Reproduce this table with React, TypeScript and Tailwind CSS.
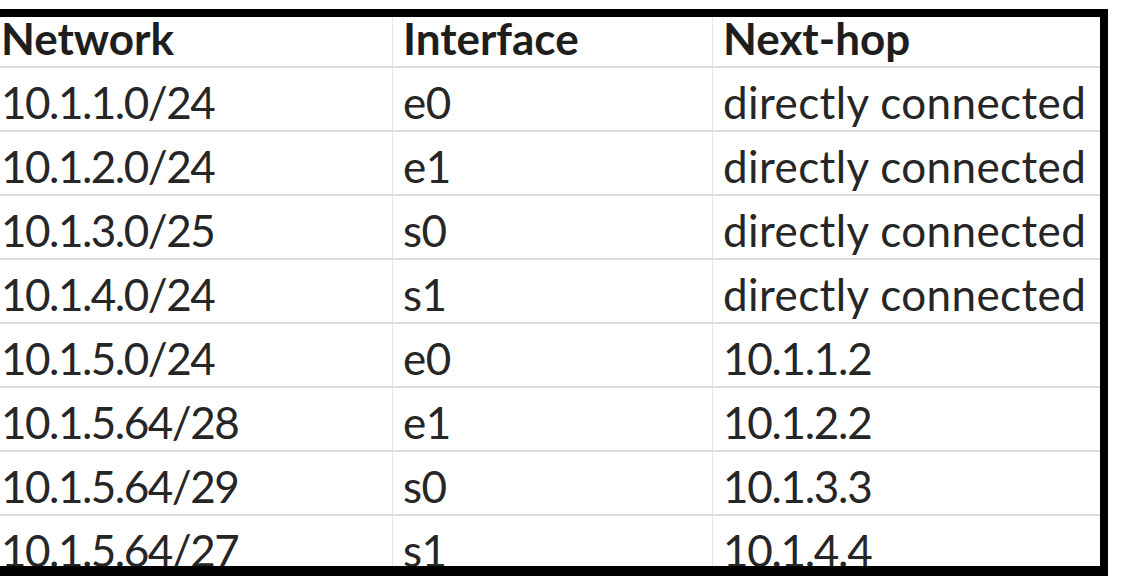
import React from "react";

const rows: [string, string, string][] = [
  ["10.1.1.0/24", "e0", "directly connected"],
  ["10.1.2.0/24", "e1", "directly connected"],
  ["10.1.3.0/25", "s0", "directly connected"],
  ["10.1.4.0/24", "s1", "directly connected"],
  ["10.1.5.0/24", "e0", "10.1.1.2"],
  ["10.1.5.64/28", "e1", "10.1.2.2"],
  ["10.1.5.64/29", "s0", "10.1.3.3"],
  ["10.1.5.64/27", "s1", "10.1.4.4"],
];

function Cell({
  children,
  last,
  header,
  track,
}: {
  children: React.ReactNode;
  last?: boolean;
  header?: boolean;
  track?: string;
}) {
  return (
    <div
      className={
        "flex items-end pl-[10px] pb-[6px] border-b-2 border-[#dcdcdc] whitespace-nowrap " +
        (last ? "" : "border-r border-r-[#e4e4e4] ") +
        (header ? "font-bold text-[#1e1e1e] " : "text-[#262626] ") +
        (track ?? "")
      }
    >
      {children}
    </div>
  );
}

export default function App() {
  return (
    <div
      className="w-[1128px] h-[576px] bg-white overflow-hidden pt-[9px]"
      style={{ fontFamily: "Lato, 'Open Sans', sans-serif" }}
    >
      <div className="w-[1108px] h-[567px] border-t-[8px] border-r-[8px] border-b-[10px] border-black overflow-hidden bg-white">
        <div className="-ml-[9px] grid grid-cols-[402px_320px_387px] auto-rows-[64px] grid-rows-[51px] text-[44px] leading-none">
          <Cell header>Network</Cell>
          <Cell header>Interface</Cell>
          <Cell header last>Next-hop</Cell>
          {rows.map((r, i) => (
            <React.Fragment key={i}>
              <Cell track="tracking-[-1.5px]">{r[0]}</Cell>
              <Cell track="tracking-[-0.5px]">{r[1]}</Cell>
              <Cell last track={r[2].startsWith("10") ? "tracking-[-1.3px]" : "tracking-[0.4px]"}>
                {r[2]}
              </Cell>
            </React.Fragment>
          ))}
        </div>
      </div>
    </div>
  );
}
